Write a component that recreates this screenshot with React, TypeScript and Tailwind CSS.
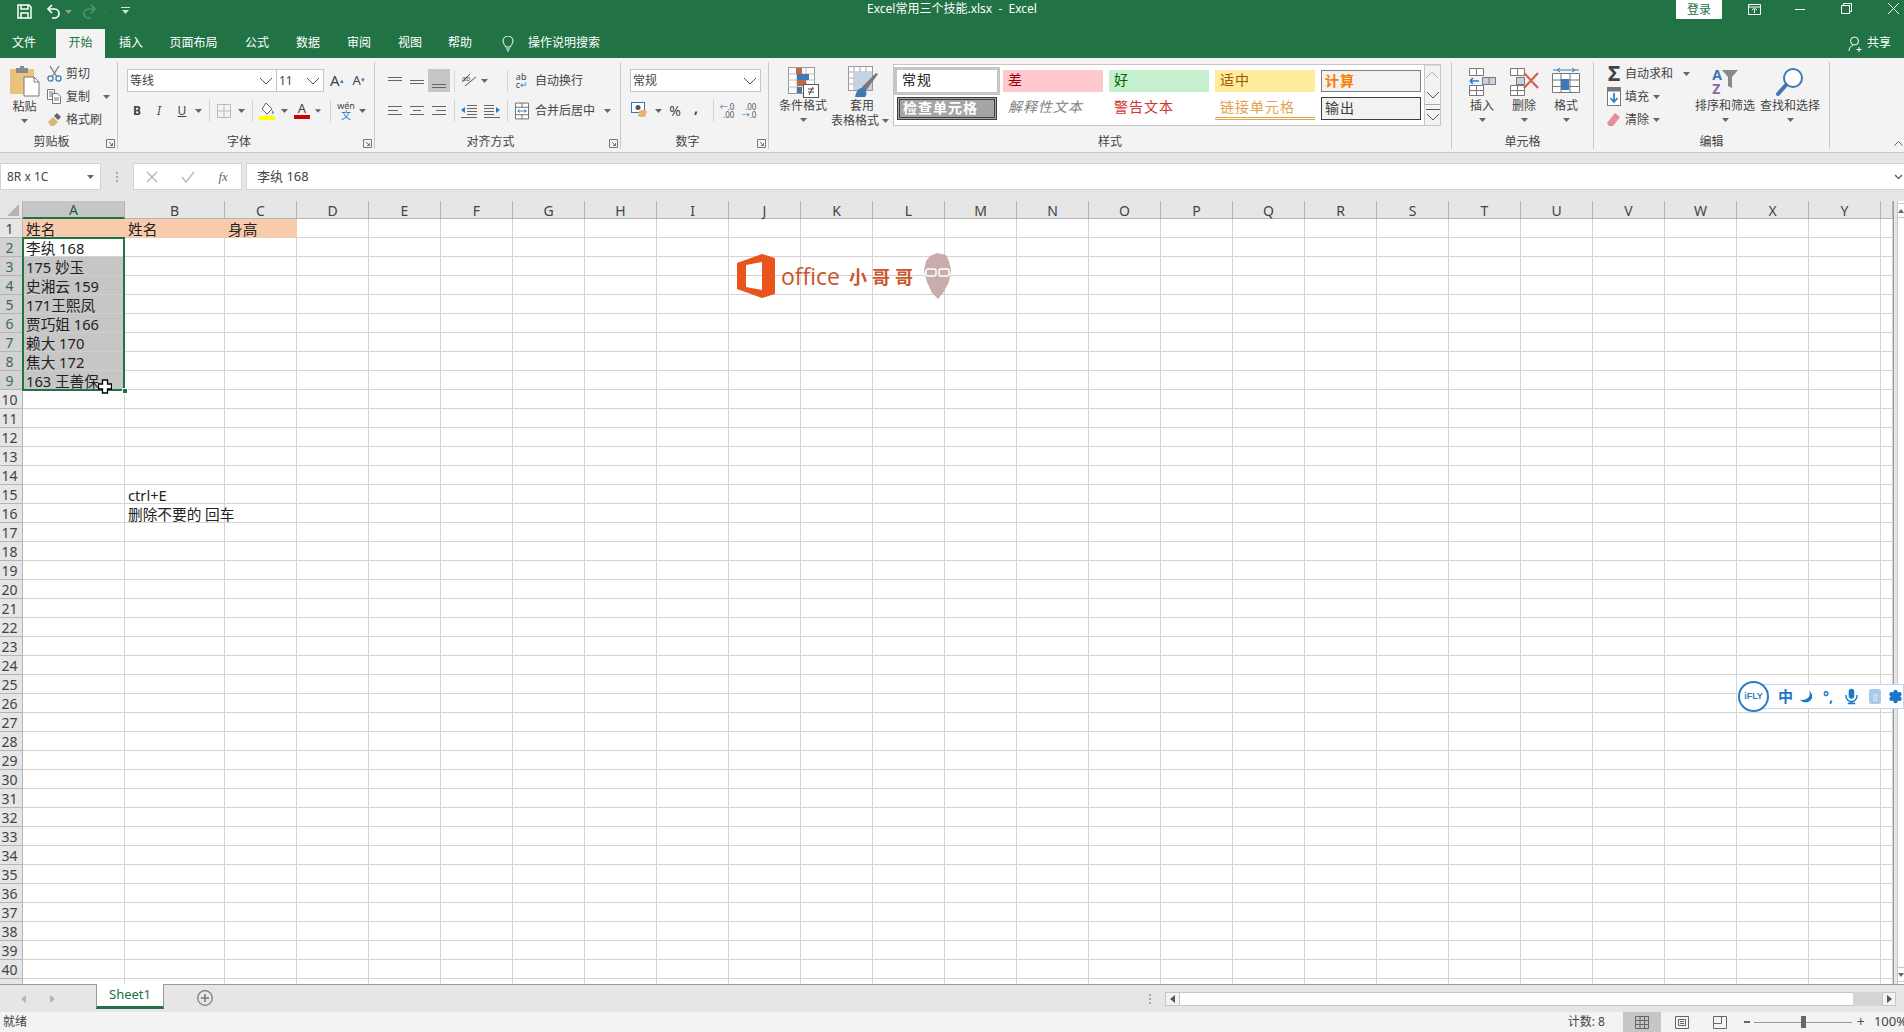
import { Fragment } from "react";
import { Settings } from "lucide-react";

const COLUMNS = ["A","B","C","D","E","F","G","H","I","J","K","L","M","N","O","P","Q","R","S","T","U","V","W","X","Y",""];
const CELLS: Record<string, string> = {
    A1: "姓名", B1: "姓名", C1: "身高",
    A2: "李纨 168", A3: "175 妙玉", A4: "史湘云 159", A5: "171王熙凤",
    A6: "贾巧姐 166", A7: "赖大 170", A8: "焦大 172", A9: "163 王善保",
    B15: "ctrl+E", B16: "删除不要的 回车",
};
const ROWS = Array.from({ length: 41 }, (_, i) => i + 1);
const TABS: [string, string][] = [
    ["文件", "w-[48px] mr-[8px]"], ["开始", "w-[49px]"], ["插入", "w-[52px]"], ["页面布局", "w-[73px]"], ["公式", "w-[54px]"],
    ["数据", "w-[48px]"], ["审阅", "w-[54px]"], ["视图", "w-[48px]"], ["帮助", "w-[52px]"],
];

function Caret({ className = "" }: { className?: string }) {
    return (
        <svg width="7" height="4" viewBox="0 0 7 4" className={className}>
            <path d="M0 0h7L3.5 4z" fill="#666" />
        </svg>
    );
}

function Chevron() {
    return (
        <svg width="14" height="8" viewBox="0 0 14 8" fill="none" stroke="#555" strokeWidth="1">
            <path d="M1 1l6 6 6-6" />
        </svg>
    );
}

function Launcher() {
    return (
        <svg width="9" height="9" viewBox="0 0 9 9" fill="none" stroke="#777" strokeWidth="1">
            <path d="M.5 8.5V.5h8v8zM3 3l3.5 3.5M6.5 4v2.5H4" />
        </svg>
    );
}

function Sep({ className = "h-[22px]" }: { className?: string }) {
    return <span className={"w-px bg-[#d4d4d4] " + className} />;
}

function Lines({ kind }: { kind: "top" | "mid" | "bottom" | "left" | "center" | "right" }) {
    const ys = kind === "top" ? [5, 8] : kind === "mid" ? [8, 11] : kind === "bottom" ? [12, 15] : [4, 8, 12];
    return (
        <svg width="16" height="18" viewBox="0 0 16 18" stroke="#666" strokeWidth="1">
            {ys.map((y, i) => {
                const inset = kind === "center" && i === 1 ? 3 : 0;
                const short = kind === "left" && i === 1 ? 4 : 0;
                const shortR = kind === "right" && i === 1 ? 4 : 0;
                return <line key={y} x1={1 + inset + shortR} x2={15 - inset - short} y1={y + 0.5} y2={y + 0.5} />;
            })}
        </svg>
    );
}

function Group({ width, label, launcher, children }: { width: string; label: string; launcher?: boolean; children: React.ReactNode }) {
    return (
        <div className={"flex flex-col h-[87px] border-r border-[#c8c8c8] shrink-0 " + width}>
            <div className="h-[73px]">{children}</div>
            <div className="flex items-center h-[14px] text-[12px] leading-[14px] text-[#444]">
                <span className="flex-1 text-center">{label}</span>
                {launcher && <span className="flex items-center justify-end w-[14px] pr-[2px] mt-[2px]"><Launcher /></span>}
            </div>
        </div>
    );
}

function Combo({ value, width }: { value: string; width: string }) {
    return (
        <div className={"flex items-center justify-between h-[23px] bg-white border border-[#c6c6c6] pl-[2px] pr-[3px] text-[12px] text-[#444] " + width}>
            <span>{value}</span>
            <Chevron />
        </div>
    );
}

function TallButton({ icon, label, width = "w-[42px]" }: { icon: React.ReactNode; label: string; width?: string }) {
    return (
        <div className={"flex flex-col items-center pt-[4px] shrink-0 text-[12px] text-[#444] " + width}>
            <div className="flex items-center justify-center h-[32px]">{icon}</div>
            <span className="h-[16px] leading-[16px] whitespace-nowrap">{label}</span>
            <div className="flex items-center h-[12px]"><Caret /></div>
        </div>
    );
}

function SaveIcon() {
    return (
        <svg width="15" height="15" viewBox="0 0 15 15" fill="none" stroke="#fff" strokeWidth="1.5">
            <path d="M1 1h11l2 2v11H1z" />
            <path d="M4 1v4h7V1M4 14V9h7v5" />
        </svg>
    );
}

function UndoIcon({ color, flip }: { color: string; flip?: boolean }) {
    return (
        <svg width="15" height="15" viewBox="0 0 15 15" fill="none" stroke={color} strokeWidth="1.7" className={flip ? "-scale-x-100" : ""}>
            <path d="M6 1L2 5l4 4" />
            <path d="M2 5h6.5a4 4 0 0 1 0 9H6" />
        </svg>
    );
}

function PasteIcon() {
    return (
        <svg width="30" height="31" viewBox="0 0 30 31">
            <rect x="0" y="3" width="24" height="25" rx="1" fill="#e9c27c" />
            <rect x="6" y="2" width="12" height="5" fill="#8a8a8a" />
            <rect x="10" y="0" width="4" height="3" fill="#8a8a8a" />
            <path d="M14 11h10l5 5v14H14z" fill="#fff" stroke="#7a7a7a" />
            <path d="M24 11v5h5" fill="none" stroke="#7a7a7a" />
        </svg>
    );
}

function CutIcon() {
    return (
        <svg width="15" height="16" viewBox="0 0 15 16" fill="none" strokeWidth="1.2">
            <path d="M3 0l7 11M12 0L5 11" stroke="#777" />
            <circle cx="3.5" cy="12.5" r="2.6" stroke="#3f78b5" />
            <circle cx="11.5" cy="12.5" r="2.6" stroke="#3f78b5" />
        </svg>
    );
}

function CopyIcon() {
    return (
        <svg width="15" height="15" viewBox="0 0 15 15" fill="#fff" stroke="#777">
            <path d="M.5.5h7v10h-7zM2 3h4M2 5h4M2 7h4" />
            <path d="M5.5 4.5h5l3 3v7h-8z" />
            <path d="M7 9h5M7 11h5" />
        </svg>
    );
}

function PainterIcon() {
    return (
        <svg width="16" height="15" viewBox="0 0 16 15">
            <path d="M1 10l5-5 5 5-4 4H4z" fill="#d9b77a" />
            <path d="M7 4l3-3 4 4-3 3z" fill="#666" />
        </svg>
    );
}

function BorderIcon() {
    return (
        <svg width="14" height="14" viewBox="0 0 14 14" stroke="#888" strokeDasharray="1 1" fill="none">
            <path d="M.5.5h13v13H.5zM7 .5v13M.5 7h13" />
        </svg>
    );
}

function FillIcon() {
    return (
        <svg width="16" height="18" viewBox="0 0 16 18">
            <path d="M7 1l6 6-5 5-5-5z" fill="#fff" stroke="#666" />
            <path d="M13 8s2 2 2 3-2 1-2 0 0-3 0-3z" fill="#5a8fc7" />
            <rect x="0" y="14" width="16" height="4" fill="#ffff00" />
        </svg>
    );
}

function FontColorIcon() {
    return (
        <div className="flex flex-col items-center w-[16px]">
            <span className="text-[13px] leading-[13px] text-[#444]">A</span>
            <span className="w-[16px] h-[4px] bg-[#d00000]" />
        </div>
    );
}

function WrapIcon() {
    return (
        <div className="flex flex-col text-[9px] leading-[8px] text-[#444]">
            <span>ab</span>
            <span>c<span className="text-[#2b7cc7]">↵</span></span>
        </div>
    );
}

function OrientIcon() {
    return (
        <svg width="18" height="16" viewBox="0 0 18 16" fill="none" stroke="#555">
            <path d="M2 9l8-8M5 13L16 4" />
            <text x="2" y="8" fontSize="7" fill="#555" stroke="none">ab</text>
        </svg>
    );
}

function IndentIcon({ flip }: { flip?: boolean }) {
    return (
        <svg width="16" height="14" viewBox="0 0 16 14" className={flip ? "-scale-x-100" : ""}>
            <path d="M6 1.5h10M6 4.5h10M6 7.5h10M6 10.5h10M0 13.5h16" stroke="#666" fill="none" />
            <path d="M0 6l4-3v6z" fill="#2b7cc7" />
        </svg>
    );
}

function MergeIcon() {
    return (
        <svg width="15" height="18" viewBox="0 0 15 18" fill="#fff" stroke="#666">
            <path d="M.5.5h14v17H.5zM.5 5h14M.5 13h14M7.5.5V5M7.5 13v4.5" />
            <path d="M3 9h9M3 9l2-1.5M3 9l2 1.5M12 9l-2-1.5M12 9l-2 1.5" stroke="#2b7cc7" />
        </svg>
    );
}

function CurrencyIcon() {
    return (
        <svg width="18" height="17" viewBox="0 0 18 17">
            <rect x="0.5" y="0.5" width="13" height="10" fill="#fff" stroke="#2b7cc7" />
            <circle cx="7" cy="5.5" r="2.5" fill="#555" />
            <ellipse cx="12" cy="10" rx="4" ry="2" fill="#e4b56e" />
            <ellipse cx="11" cy="13" rx="4" ry="2" fill="#e4b56e" />
        </svg>
    );
}

function Decimal({ flip }: { flip?: boolean }) {
    return (
        <div className="flex flex-col items-end text-[8px] leading-[8px] text-[#555]">
            <span>{flip ? ".00" : <><span className="text-[#2b7cc7]">←</span>.0</>}</span>
            <span>{flip ? <><span className="text-[#2b7cc7]">→</span>.0</> : ".00"}</span>
        </div>
    );
}

function CondFormatIcon() {
    return (
        <svg width="31" height="31" viewBox="0 0 31 31" fill="none">
            <rect x="0.5" y="0.5" width="26" height="26" fill="#fff" stroke="#999" />
            <path d="M9 .5v26M18 .5v26M.5 7h26M.5 13h26M.5 20h26" stroke="#bbb" />
            <rect x="8" y="1" width="6" height="6" fill="#c0694a" />
            <rect x="9" y="7" width="12" height="6" fill="#3f78b5" />
            <rect x="9" y="13" width="9" height="6" fill="#c0694a" />
            <rect x="9" y="20" width="5" height="6" fill="#3f78b5" />
            <rect x="15.5" y="17.5" width="15" height="13" fill="#fff" stroke="#555" />
            <path d="M20 22h6M20 25h6M25 20l-4 8" stroke="#444" />
        </svg>
    );
}

function TableFormatIcon() {
    return (
        <svg width="31" height="32" viewBox="0 0 31 32" fill="none">
            <rect x="0.5" y="0.5" width="24" height="24" fill="#fff" stroke="#999" />
            <path d="M6 .5v24M12 .5v24M18 .5v24M.5 6h24M.5 12h24M.5 18h24" stroke="#aaa" />
            <rect x="6" y="6" width="18" height="18" fill="#c5d2e3" />
            <path d="M30 8L17 26l-4-1 1-4L28 7z" fill="#777" />
            <path d="M14 22c-4 0-6 4-7 9h10c3-3 1-8-3-9z" fill="#3f78b5" />
        </svg>
    );
}

function InsertIcon() {
    return (
        <svg width="27" height="28" viewBox="0 0 27 28" fill="#fff" stroke="#777">
            <path d="M.5.5h14v7H.5zM7.500.5v7M.5 17.500h14v10H.5zM7.500 17.500v10M.5 22.500h14" />
            <path d="M13.500 9.500h13v7h-13zM20 9.500v7" fill="#c5d2e3" />
            <path d="M1 13h9M1 13l3-3M1 13l3 3" stroke="#2b7cc7" strokeWidth="1.600" fill="none" />
        </svg>
    );
}

function DeleteIcon() {
    return (
        <svg width="29" height="28" viewBox="0 0 29 28" fill="#fff" stroke="#777">
            <path d="M.5.5h14v7H.5zM7.500.5v7M.5 17.500h14v10H.5zM7.500 17.500v10M.5 22.500h14" />
            <path d="M6.500 9.500h8v7h-8z" fill="#c5d2e3" />
            <path d="M14 5l14 15M28 5L14 20" stroke="#d8614a" strokeWidth="2.200" />
        </svg>
    );
}

function CellFormatIcon() {
    return (
        <svg width="28" height="30" viewBox="0 0 28 30" fill="#fff" stroke="#777">
            <path d="M1 3h26M5 3l3-2M5 3l3 2M23 3l-3-2M23 3l-3 2" stroke="#3f78b5" fill="none" />
            <path d="M.5 6.500h27v19H.5zM9 6.500v19M18 6.500v19M.5 13h27M.5 19.500h27" />
            <rect x="9" y="12" width="8" height="11" fill="#3f78b5" stroke="none" />
        </svg>
    );
}

function FillDownIcon() {
    return (
        <svg width="14" height="19" viewBox="0 0 14 19">
            <rect x="0.5" y="0.5" width="13" height="18" fill="#fff" stroke="#777" />
            <rect x="0.5" y="0.5" width="13" height="4" fill="#777" />
            <path d="M7 6v9M3.500 11L7 15l3.500-4" stroke="#2b7cc7" strokeWidth="1.700" fill="none" />
        </svg>
    );
}

function EraserIcon() {
    return (
        <svg width="14" height="15" viewBox="0 0 14 15">
            <path d="M8 1l5 4-7 9H2L0 11z" fill="#e58b9e" />
        </svg>
    );
}

function SortIcon() {
    return (
        <div className="flex items-center">
            <div className="flex flex-col font-bold text-[14px] leading-[14px]">
                <span className="text-[#3f78b5]">A</span>
                <span className="text-[#8a65a8]">Z</span>
            </div>
            <svg width="16" height="18" viewBox="0 0 16 18" className="-mt-[6px]">
                <path d="M0 0h16L10 7v11l-4-2V7z" fill="#888" />
            </svg>
        </div>
    );
}

function FindIcon() {
    return (
        <svg width="28" height="30" viewBox="0 0 28 30" fill="none">
            <circle cx="17" cy="11" r="9" fill="#fff" stroke="#3f78b5" strokeWidth="2" />
            <path d="M10 18L2 27" stroke="#3f78b5" strokeWidth="4" strokeLinecap="round" />
        </svg>
    );
}

function OfficeLogo() {
    return (
        <svg width="38" height="44" viewBox="0 0 38 44">
            <path fillRule="evenodd" d="M0 9L25 0l13 4v36l-13 4L0 35zM9 11l16-3v28l-16-3z" fill="#e9541c" />
        </svg>
    );
}

function HeadLogo() {
    return (
        <svg width="28" height="46" viewBox="0 0 28 46">
            <path d="M6 3l7-3 9 2 3 6 2 9-2 12-6 11-5 6-6-6-5-11L0 17 2 8z" fill="#c9adad" />
            <rect x="2" y="16" width="10" height="7" rx="2" fill="none" stroke="#fff" strokeWidth="1.500" />
            <rect x="15" y="16" width="10" height="7" rx="2" fill="none" stroke="#fff" strokeWidth="1.500" />
        </svg>
    );
}

function FillCursor() {
    return (
        <svg width="14" height="15" viewBox="0 0 14 15">
            <path d="M4.500 1h5v4h4v5h-4v4h-5v-4h-4V5h4z" fill="#fff" stroke="#000" strokeWidth="1.300" />
        </svg>
    );
}

function MicIcon() {
    return (
        <svg width="14" height="17" viewBox="0 0 14 17" fill="#1a78c8">
            <rect x="4" y="0" width="6" height="11" rx="3" />
            <path d="M1 7v1a6 6 0 0 0 12 0V7" fill="none" stroke="#1a78c8" strokeWidth="1.500" />
            <path d="M6 13h2v2h3v2H3v-2h3z" />
        </svg>
    );
}

export default function App() {
    return (
        <div className="relative flex flex-col w-[1904px] h-[1032px] overflow-hidden bg-[#e6e6e6] text-[#333] [font-family:'Noto_Sans','Noto_Sans_CJK_SC',sans-serif]">
            {/* Title bar and tabs */}
            <div className="h-[58px] shrink-0 bg-[#217346] text-white">
                <div className="grid grid-cols-[1fr_auto_1fr] h-[29px]">
                    <div className="flex items-start pt-[4px] pl-[17px]">
                        <SaveIcon />
                        <span className="ml-[14px]"><UndoIcon color="#fff" /></span>
                        <Caret className="ml-[4px] mt-[6px] invert" />
                        <span className="ml-[10px]"><UndoIcon color="#4f9472" flip /></span>
                        <Caret className="ml-[4px] mt-[6px] opacity-40" />
                        <svg width="9" height="8" viewBox="0 0 9 8" className="ml-[13px] mt-[3px]" stroke="#cfe3d8" fill="#cfe3d8">
                            <path d="M0 .5h9" /><path d="M1 3h7L4.500 7z" stroke="none" />
                        </svg>
                    </div>
                    <div className="text-[12px] leading-[18px] whitespace-pre">Excel常用三个技能.xlsx  -  Excel</div>
                    <div className="flex items-start justify-end pr-[5px]">
                        <div className="flex items-center justify-center w-[46px] h-[19px] bg-white text-[#217346] text-[12px] rounded-b-[1px] mr-[26px]">登录</div>
                        <svg width="13" height="11" viewBox="0 0 13 11" fill="none" stroke="#fff" className="mt-[4px] mr-[34px]">
                            <path d="M.5.5h12v10H.5zM.5 3h12M6.500 5v4M4 6l2.500-2L9 6" />
                        </svg>
                        <span className="w-[10px] h-px bg-white mt-[9px] mr-[36px]" />
                        <svg width="11" height="11" viewBox="0 0 11 11" fill="none" stroke="#fff" className="mt-[3px] mr-[36px]">
                            <path d="M.5 2.500h8v8h-8zM2.500 2.500v-2h8v8h-2" />
                        </svg>
                        <svg width="11" height="11" viewBox="0 0 11 11" stroke="#fff" className="mt-[3px]">
                            <path d="M0 0l11 11M11 0L0 11" />
                        </svg>
                    </div>
                </div>
                <div className="flex items-stretch h-[29px] text-[12px]">
                    {TABS.map(([name, width]) => (
                        <div key={name} className={"flex items-center justify-center pb-[1px] shrink-0 " + width + (name === "开始" ? " bg-[#f3f3f3] text-[#217346]" : "")}>
                            {name}
                        </div>
                    ))}
                    <div className="flex items-center ml-[16px]">
                        <svg width="12" height="16" viewBox="0 0 12 16" fill="none" stroke="#fff">
                            <path d="M3.500 11c0-2-2.500-3-2.500-6a5 5 0 0 1 10 0c0 3-2.500 4-2.500 6zM4 13h4M5 15h2" />
                        </svg>
                        <span className="ml-[14px] pb-[1px]">操作说明搜索</span>
                    </div>
                    <div className="flex items-center ml-auto pr-[13px]">
                        <svg width="15" height="16" viewBox="0 0 15 16" fill="none" stroke="#fff" className="mr-[2px]">
                            <circle cx="6.500" cy="5" r="4" />
                            <path d="M1 15c0-3 2-5 4-6M11 11v5M8.500 13.500h5" />
                        </svg>
                        <span className="ml-[2px] pb-[1px]">共享</span>
                    </div>
                </div>
            </div>

            {/* Ribbon */}
            <div className="flex h-[95px] shrink-0 pt-[4px] bg-[#f3f3f3] border-b border-[#c8c8c8] text-[12px] text-[#444]">
                <Group width="w-[118px]" label="剪贴板" launcher>
                    <div className="flex">
                        <div className="flex flex-col items-center w-[47px] pt-[4px] pl-[2px] shrink-0">
                            <div className="h-[33px]"><PasteIcon /></div>
                            <span className="h-[16px] leading-[16px]">粘贴</span>
                            <div className="flex items-center h-[11px]"><Caret /></div>
                        </div>
                        <div className="flex flex-col">
                            <div className="flex items-center h-[23px] gap-[4px]"><CutIcon /><span>剪切</span></div>
                            <div className="flex items-center h-[23px] gap-[4px]"><CopyIcon /><span>复制</span><Caret className="ml-[9px]" /></div>
                            <div className="flex items-center h-[23px] gap-[3px]"><PainterIcon /><span>格式刷</span></div>
                        </div>
                    </div>
                </Group>

                <Group width="w-[257px]" label="字体" launcher>
                    <div className="flex items-center pt-[7px] pl-[9px]">
                        <Combo value="等线" width="w-[150px]" />
                        <Combo value="11" width="w-[48px] -ml-px" />
                        <span className="ml-[6px] text-[15px] leading-[23px]">A<sup className="text-[#2b7cc7] text-[7px]">▴</sup></span>
                        <span className="ml-[9px] text-[13px] leading-[23px]">A<sup className="text-[#2b7cc7] text-[7px]">▾</sup></span>
                    </div>
                    <div className="flex items-center h-[23px] mt-[7px] pl-[8px]">
                        <span className="flex justify-center w-[22px] font-bold">B</span>
                        <span className="flex justify-center w-[22px] italic">I</span>
                        <span className="flex justify-center w-[24px] underline">U</span>
                        <span className="flex justify-center w-[9px]"><Caret /></span>
                        <span className="flex justify-center w-[12px]"><Sep /></span>
                        <span className="flex justify-center w-[18px]"><BorderIcon /></span>
                        <span className="flex justify-center w-[16px]"><Caret /></span>
                        <span className="flex justify-center w-[6px]"><Sep /></span>
                        <span className="flex justify-center w-[24px]"><FillIcon /></span>
                        <span className="flex justify-center w-[10px]"><Caret /></span>
                        <span className="flex justify-center w-[26px]"><FontColorIcon /></span>
                        <span className="flex justify-center w-[6px]"><Caret /></span>
                        <span className="flex justify-center w-[18px]"><Sep /></span>
                        <span className="flex flex-col items-center w-[14px] text-[9px] leading-[9px]">wén<span className="text-[#2b7cc7] text-[10px] leading-[10px]">文</span></span>
                        <span className="flex justify-center w-[18px]"><Caret /></span>
                    </div>
                </Group>

                <Group width="w-[246px]" label="对齐方式" launcher>
                    <div className="flex items-center h-[23px] mt-[7px] pl-[9px]">
                        <span className="flex justify-center w-[22px]"><Lines kind="top" /></span>
                        <span className="flex justify-center w-[22px]"><Lines kind="mid" /></span>
                        <span className="flex justify-center items-center w-[22px] h-[23px] bg-[#c6c6c6]"><Lines kind="bottom" /></span>
                        <span className="flex justify-center w-[8px]"><Sep /></span>
                        <span className="flex justify-center w-[22px]"><OrientIcon /></span>
                        <span className="flex justify-center w-[8px]"><Caret /></span>
                        <span className="flex justify-center w-[16px] ml-[11px]"><Sep /></span>
                        <span className="flex justify-center w-[14px]"><WrapIcon /></span>
                        <span className="ml-[6px]">自动换行</span>
                    </div>
                    <div className="flex items-center h-[23px] mt-[7px] pl-[9px]">
                        <span className="flex justify-center w-[22px]"><Lines kind="left" /></span>
                        <span className="flex justify-center w-[22px]"><Lines kind="center" /></span>
                        <span className="flex justify-center w-[22px]"><Lines kind="right" /></span>
                        <span className="flex justify-center w-[8px]"><Sep /></span>
                        <span className="flex justify-center w-[22px]"><IndentIcon /></span>
                        <span className="flex justify-center w-[23px]"><IndentIcon flip /></span>
                        <span className="flex justify-center w-[8px]"><Sep /></span>
                        <span className="flex justify-center w-[14px] ml-[4px]"><MergeIcon /></span>
                        <span className="ml-[6px]">合并后居中</span>
                        <Caret className="ml-[9px]" />
                    </div>
                </Group>

                <Group width="w-[148px]" label="数字" launcher>
                    <div className="pt-[7px] pl-[9px]">
                        <Combo value="常规" width="w-[131px]" />
                    </div>
                    <div className="flex items-center h-[23px] mt-[7px] pl-[9px]">
                        <span className="flex justify-center w-[20px]"><CurrencyIcon /></span>
                        <span className="flex justify-center w-[16px]"><Caret /></span>
                        <span className="flex justify-center w-[18px] text-[14px]">%</span>
                        <span className="flex justify-center w-[24px] font-bold text-[14px] -mt-[6px]">,</span>
                        <span className="flex justify-center w-[10px]"><Sep /></span>
                        <span className="flex justify-center w-[18px]"><Decimal /></span>
                        <span className="flex justify-center w-[18px] ml-[4px]"><Decimal flip /></span>
                    </div>
                </Group>

                <Group width="w-[683px]" label="样式">
                    <div className="flex">
                        <div className="flex pl-[6px]">
                            <TallButton icon={<CondFormatIcon />} label="条件格式" width="w-[56px]" />
                            <div className="flex flex-col items-center w-[62px] pt-[4px] shrink-0">
                                <div className="flex items-center h-[32px] ml-[2px]"><TableFormatIcon /></div>
                                <span className="h-[16px] leading-[16px]">套用</span>
                                <span className="flex items-center h-[14px] whitespace-nowrap -ml-[4px]">表格格式<Caret className="ml-[3px]" /></span>
                            </div>
                        </div>
                        <div className="flex mt-[2px] w-[548px] h-[62px] bg-white border border-[#c6c6c6]">
                            <div className="grid grid-cols-[100px_100px_100px_100px_100px] grid-rows-[22px_23px] gap-x-[6px] gap-y-[5px] pl-[3px] pt-[5px] text-[14px] leading-[20px] tracking-[1px] flex-1">
                                <div className="pl-[5px] bg-white text-[#222] outline-[3px] outline-[#c6c6c6]">常规</div>
                                <div className="pl-[5px] bg-[#ffc7ce] text-[#9c0006]">差</div>
                                <div className="pl-[5px] bg-[#c6efce] text-[#006100]">好</div>
                                <div className="pl-[5px] bg-[#ffeb9c] text-[#9c5700]">适中</div>
                                <div className="pl-[3px] bg-[#f2f2f2] text-[#fa7d00] font-bold border border-[#7f7f7f]">计算</div>
                                <div className="pl-[3px] bg-[#a5a5a5] text-white font-bold border-[3px] border-double border-[#3f3f3f] leading-[16px]">检查单元格</div>
                                <div className="pl-[5px] italic text-[#7f7f7f]">解释性文本</div>
                                <div className="pl-[5px] text-[#d0342c]">警告文本</div>
                                <div className="pl-[5px] text-[#e5a24e] border-b-[3px] border-double border-[#e5a24e]">链接单元格</div>
                                <div className="pl-[3px] bg-[#f2f2f2] text-[#3f3f3f] border border-[#3f3f3f]">输出</div>
                            </div>
                            <div className="flex flex-col w-[16px] shrink-0 border-l border-[#c6c6c6] bg-[#f3f3f3]">
                                <div className="flex items-center justify-center h-[20px] border-b border-[#c6c6c6] rotate-180 opacity-40"><Chevron /></div>
                                <div className="flex items-center justify-center h-[20px] border-b border-[#aaa]"><Chevron /></div>
                                <div className="flex flex-col items-center justify-center flex-1"><span className="w-[14px] h-px bg-[#555] mb-[3px]" /><Chevron /></div>
                            </div>
                        </div>
                    </div>
                </Group>

                <Group width="w-[142px]" label="单元格">
                    <div className="flex pl-[9px]">
                        <TallButton icon={<InsertIcon />} label="插入" />
                        <TallButton icon={<DeleteIcon />} label="删除" />
                        <TallButton icon={<CellFormatIcon />} label="格式" />
                    </div>
                </Group>

                <Group width="w-[236px]" label="编辑">
                    <div className="flex">
                        <div className="flex flex-col w-[101px] pl-[13px] shrink-0">
                            <div className="flex items-center h-[23px]">
                                <span className="flex justify-center w-[14px] text-[21px] font-bold leading-[23px] text-[#444]">Σ</span>
                                <span className="ml-[4px]">自动求和</span>
                                <Caret className="ml-[10px]" />
                            </div>
                            <div className="flex items-center h-[23px]">
                                <FillDownIcon />
                                <span className="ml-[4px]">填充</span>
                                <Caret className="ml-[4px]" />
                            </div>
                            <div className="flex items-center h-[23px]">
                                <EraserIcon />
                                <span className="ml-[4px]">清除</span>
                                <Caret className="ml-[4px]" />
                            </div>
                        </div>
                        <TallButton icon={<SortIcon />} label="排序和筛选" width="w-[60px]" />
                        <TallButton icon={<FindIcon />} label="查找和选择" width="w-[60px] ml-[5px]" />
                    </div>
                </Group>

                <div className="flex flex-1 items-end justify-end pr-[1px] pb-[6px]">
                    <svg width="9" height="5" viewBox="0 0 9 5" fill="none" stroke="#666"><path d="M.5 4.500l4-4 4 4" /></svg>
                </div>
            </div>

            {/* Formula bar */}
            <div className="flex h-[27px] mt-[10px] shrink-0 text-[#444]">
                <div className="flex items-center justify-between w-[101px] bg-white border border-[#d4d4d4] pl-[6px] pr-[6px] text-[12px]">
                    <span>8R x 1C</span>
                    <Caret />
                </div>
                <div className="flex flex-col justify-center items-center gap-[2px] w-[32px]">
                    <span className="w-[2px] h-[2px] bg-[#aaa]" />
                    <span className="w-[2px] h-[2px] bg-[#aaa]" />
                    <span className="w-[2px] h-[2px] bg-[#aaa]" />
                </div>
                <div className="flex items-center w-[109px] bg-white border border-[#d4d4d4] text-[#bbb]">
                    <span className="flex justify-center w-[36px]">
                        <svg width="12" height="12" viewBox="0 0 12 12" stroke="#bbb" strokeWidth="1.500"><path d="M1 1l10 10M11 1L1 11" /></svg>
                    </span>
                    <span className="flex justify-center w-[36px]">
                        <svg width="14" height="12" viewBox="0 0 14 12" stroke="#bbb" strokeWidth="1.500" fill="none"><path d="M1 6l4 5 8-10" /></svg>
                    </span>
                    <span className="flex justify-center w-[36px] italic text-[13px] text-[#666] [font-family:'Liberation_Serif',serif]">fx</span>
                </div>
                <div className="flex items-center justify-between flex-1 ml-[4px] bg-white border-y border-l border-[#d4d4d4] pl-[10px] pr-[1px] text-[13px]">
                    <span>李纨 168</span>
                    <svg width="9" height="6" viewBox="0 0 9 6" fill="none" stroke="#666" strokeWidth="1.500"><path d="M1 1l3.500 3.500L8 1" /></svg>
                </div>
            </div>

            {/* Sheet */}
            <div className="flex flex-1 mt-[11px] min-h-0">
                <div className="relative w-[1893px] shrink-0 h-[783px] overflow-hidden bg-white">
                    <div className="grid grid-cols-[23px_102px_100px_72px_repeat(22,72px)_12px] grid-rows-[18px_repeat(41,19px)] text-[14.67px] leading-[20px] text-[#222]">
                        <div className="flex items-end justify-end bg-[#e6e6e6] border-r border-b border-[#b5b5b5] pr-[3px] pb-[2px]">
                            <svg width="12" height="12" viewBox="0 0 12 12"><path d="M12 0v12H0z" fill="#b4b4b4" /></svg>
                        </div>
                        {COLUMNS.map((col, i) => (
                            <div
                                key={"head" + i}
                                className={
                                    "flex items-center justify-center pt-[2px] text-[14px] border-r " +
                                    (col === "A"
                                        ? "bg-[#c6c6c6] text-[#1e5c3c] border-[#b5b5b5] border-b-[2px] border-b-[#217346]"
                                        : "bg-[#e6e6e6] text-[#444] border-[#b5b5b5] border-b border-b-[#b5b5b5]")
                                }
                            >
                                {col}
                            </div>
                        ))}
                        {ROWS.map((row) => (
                            <Fragment key={row}>
                                <div
                                    className={
                                        "flex items-center justify-center pt-[2px] pr-[3px] text-[14px] border-b border-r " +
                                        (row >= 2 && row <= 9
                                            ? "bg-[#d2d2d2] text-[#3f6b54] border-[#b5b5b5]"
                                            : "bg-[#e6e6e6] text-[#444] border-[#b5b5b5]")
                                    }
                                >
                                    {row}
                                </div>
                                {COLUMNS.map((col) => {
                                    const value = CELLS[col + row];
                                    const peach = row === 1 && (col === "A" || col === "B" || col === "C");
                                    const selected = col === "A" && row >= 3 && row <= 9;
                                    return (
                                        <div
                                            key={col + row}
                                            className={
                                                "pl-[3px] whitespace-nowrap border-r border-b " +
                                                (peach ? "bg-[#f8cbad] border-[#f8cbad]" : selected ? "bg-[#c6c6c6] border-[#cfcfcf]" : "border-[#d4d4d4]")
                                            }
                                        >
                                            {value}
                                        </div>
                                    );
                                })}
                            </Fragment>
                        ))}
                    </div>

                    {/* Selection box over A2:A9 */}
                    <div className="absolute left-[22px] top-[36px] w-[103px] h-[154px] border-2 border-[#217346] pointer-events-none" />
                    <div className="absolute left-[122px] top-[187px] w-[6px] h-[6px] bg-[#217346] border border-white" />
                    <div className="absolute left-[98px] top-[178px]"><FillCursor /></div>

                    {/* Watermark */}
                    <div className="absolute left-[737px] top-[52px] flex items-center pointer-events-none">
                        <OfficeLogo />
                        <span className="ml-[6px] text-[23px] leading-[30px] text-[#c9562c] [font-family:'Open_Sans',sans-serif]">office</span>
                        <span className="ml-[9px] text-[18px] leading-[30px] font-bold tracking-[5px] text-[#c9562c] [font-family:'Noto_Sans_CJK_SC',serif]">小哥哥</span>
                        <span className="ml-[6px]"><HeadLogo /></span>
                    </div>
                </div>
                <div className="flex flex-col w-[11px] h-[783px] shrink-0 bg-[#e6e6e6] border-l border-[#9a9a9a] pl-[3px]">
                    <div className="flex flex-col h-full bg-white border-l border-[#c6c6c6]">
                        <div className="flex items-center justify-center h-[15px] mt-[2px] bg-white border-y border-[#c6c6c6]">
                            <svg width="6" height="4" viewBox="0 0 6 4"><path d="M0 4h6L3 0z" fill="#666" /></svg>
                        </div>
                        <div className="flex items-center justify-center h-[15px] mt-auto mb-[2px] border-y border-[#c6c6c6]">
                            <svg width="6" height="4" viewBox="0 0 6 4"><path d="M0 0h6L3 4z" fill="#666" /></svg>
                        </div>
                    </div>
                </div>
            </div>

            {/* Floating iFLY input toolbar */}
            <div className="absolute left-[1738px] top-[681px] flex items-center">
                <div className="z-10 flex items-center justify-center w-[31px] h-[31px] rounded-full bg-white border-2 border-[#2b7cc7] text-[#2b7cc7] text-[9px] font-bold [font-family:'Liberation_Sans',sans-serif]">iFLY</div>
                <div className="flex items-center w-[150px] h-[25px] -ml-[15px] pl-[23px] bg-white border border-[#bcd7ef] text-[#1a78c8]">
                    <span className="text-[15px] font-bold leading-[23px] w-[24px]">中</span>
                    <svg width="14" height="14" viewBox="0 0 14 14" className="w-[14px] mr-[10px]"><path d="M10 0c2 6-1 11-10 10 3 4 11 4 13-2 1-3-1-6-3-8z" fill="#1a78c8" /></svg>
                    <span className="w-[24px] text-[14px] font-bold leading-[20px]">°,</span>
                    <MicIcon />
                    <span className="flex items-center justify-center w-[13px] h-[15px] ml-[11px] rounded-[2px] bg-[#a9cbea] text-white text-[8px]">▯</span>
                    <Settings size={15} fill="#1a78c8" className="ml-[7px] shrink-0" />
                </div>
            </div>

            {/* Sheet tabs */}
            <div className="flex items-start h-[28px] shrink-0 bg-[#e6e6e6] border-t border-[#9a9a9a]">
                <span className="ml-[21px] mt-[10px] w-0 h-0 border-y-[4px] border-y-transparent border-r-[5px] border-r-[#b5b5b5]" />
                <span className="ml-[24px] mt-[10px] w-0 h-0 border-y-[4px] border-y-transparent border-l-[5px] border-l-[#b5b5b5]" />
                <div className="flex items-center justify-center w-[68px] h-[25px] ml-[41px] -mt-px bg-white border-x border-[#9a9a9a] border-b-[3px] border-b-[#217346] text-[#217346] text-[13px]">Sheet1</div>
                <svg width="16" height="16" viewBox="0 0 16 16" fill="none" stroke="#777" className="ml-[33px] mt-[5px]">
                    <circle cx="8" cy="8" r="7.300" strokeWidth="1.200" />
                    <path d="M8 4v8M4 8h8" strokeWidth="1.500" />
                </svg>
                <div className="flex flex-col gap-[2px] ml-[936px] mt-[9px]">
                    <span className="w-[2px] h-[2px] bg-[#aaa]" />
                    <span className="w-[2px] h-[2px] bg-[#aaa]" />
                    <span className="w-[2px] h-[2px] bg-[#aaa]" />
                </div>
                <div className="flex h-[14px] mt-[7px] ml-[14px]">
                    <span className="flex items-center justify-center w-[15px] bg-[#f3f3f3] border border-[#c6c6c6]">
                        <span className="w-0 h-0 border-y-[4px] border-y-transparent border-r-[5px] border-r-[#555]" />
                    </span>
                    <span className="w-[673px] bg-white border-y border-[#c6c6c6]" />
                    <span className="w-[29px] bg-[#d4d4d4]" />
                    <span className="flex items-center justify-center w-[14px] bg-[#f3f3f3] border border-[#c6c6c6]">
                        <span className="w-0 h-0 border-y-[4px] border-y-transparent border-l-[5px] border-l-[#555]" />
                    </span>
                </div>
            </div>

            {/* Status bar */}
            <div className="flex items-center h-[20px] shrink-0 bg-[#f3f3f3] text-[12px] text-[#444]">
                <span className="ml-[3px]">就绪</span>
                <span className="ml-auto">计数: 8</span>
                <div className="flex items-center justify-center w-[38px] h-[20px] ml-[18px] bg-[#c6c6c6]">
                    <svg width="14" height="13" viewBox="0 0 14 13" fill="none" stroke="#666"><path d="M.5.5h13v12H.5zM5 .5v12M9.500.5v12M.5 4.500h13M.5 8.500h13" /></svg>
                </div>
                <svg width="14" height="13" viewBox="0 0 14 13" fill="none" stroke="#666" className="ml-[14px]"><path d="M.5.500h13v12H.5zM3.500 3.500h7v6h-7zM5 5.500h4M5 7.500h4" /></svg>
                <svg width="14" height="13" viewBox="0 0 14 13" fill="none" stroke="#666" className="ml-[24px]"><path d="M.5.500h13v12H.5zM.5 7.500h8v-7" /></svg>
                <span className="w-[6px] h-[2px] bg-[#666] ml-[17px]" />
                <div className="flex items-center w-[98px] h-px ml-[4px] bg-[#999]">
                    <span className="w-[5px] h-[12px] ml-[47px] bg-[#666]" />
                </div>
                <span className="ml-[5px] text-[14px] leading-[14px] text-[#555]">+</span>
                <span className="ml-[9px] -mr-[3px] text-[13px]">100%</span>
            </div>
        </div>
    );
}
